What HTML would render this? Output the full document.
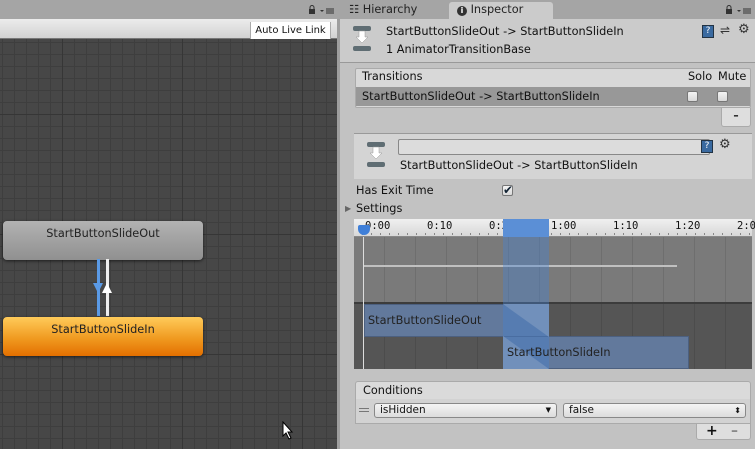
<!DOCTYPE html>
<html><head><style>
*{margin:0;padding:0;box-sizing:border-box}
body{width:755px;height:449px;overflow:hidden;background:#c2c2c2;font-family:"DejaVu Sans","Liberation Sans",sans-serif;font-size:10.5px;color:#111;position:relative}
.a{position:absolute}
.t{font-size:11.3px;margin-top:1px}
.grid{left:0;top:39px;width:337px;height:410px;background-color:#474747;
background-image:linear-gradient(#363636 1px,transparent 1px),linear-gradient(90deg,#363636 1px,transparent 1px),linear-gradient(#3e3e3e 1px,transparent 1px),linear-gradient(90deg,#3e3e3e 1px,transparent 1px);
background-size:120px 120px,120px 120px,12px 12px,12px 12px;background-position:0 -45px,62px 0,0 -9px,2px 0}
.node{border-radius:4px;text-align:center;box-shadow:0 1px 3px rgba(0,0,0,.6)}
.cb{width:11px;height:11px;border:1px solid #777;border-radius:2px;background:linear-gradient(#f4f4f4,#d8d8d8)}
</style></head><body>
<div class="a" style="left:0;top:0;width:340px;height:19px;background:#a5a5a5"></div>
<svg class="a" style="left:308px;top:5px" width="30" height="10"><path d="M2 4 V2.5 a2 2 0 0 1 4 0 V4" fill="none" stroke="#333"/><rect x="1" y="4" width="6" height="5" fill="#333"/><path d="M12 5 h4 l-2 2z" fill="#333"/><path d="M18 4h8M18 6h8M18 8h8" stroke="#333"/></svg>
<div class="a" style="left:0;top:19px;width:337px;height:20px;background:linear-gradient(#ececec,#d2d2d2);border-bottom:1px solid #777"></div>
<div class="a" style="left:250px;top:22px;width:81px;height:17px;background:#fff;border-left:1px solid #aaa;border-right:1px solid #aaa;font-size:10px;text-align:center;line-height:17px">Auto Live Link</div>
<div class="grid a"></div>
<div class="a" style="left:337px;top:19px;width:3px;height:430px;background:#9e9e9e"></div>
<div class="a node t" style="left:3px;top:220px;width:200px;height:39px;background:linear-gradient(#b2b2b2,#909090);line-height:26px;color:#222">StartButtonSlideOut</div>
<div class="a" style="left:97px;top:259px;width:3px;height:57px;background:#5a9ae6"></div>
<div class="a" style="left:106px;top:259px;width:3px;height:57px;background:#eee"></div>
<div class="a" style="left:93px;top:283px;width:0;height:0;border-left:5px solid transparent;border-right:5px solid transparent;border-top:10px solid #5a9ae6"></div>
<div class="a" style="left:102px;top:283px;width:0;height:0;border-left:5px solid transparent;border-right:5px solid transparent;border-bottom:10px solid #fff"></div>
<div class="a node t" style="left:3px;top:316px;width:200px;height:39px;background:linear-gradient(#ffcb5a,#f09a20 55%,#e36f00);line-height:26px;color:#222">StartButtonSlideIn</div>
<svg class="a" style="left:282px;top:421px" width="12" height="19"><path d="M1 1 L1 15 L4 12 L7 18 L9 17 L6 11 L10 11 Z" fill="#fff" stroke="#000" stroke-width="1"/></svg>
<div class="a" style="left:340px;top:0;width:415px;height:19px;background:#a5a5a5"></div>
<div class="a t" style="left:349px;top:2px;color:#222">☷ Hierarchy</div>
<div class="a t" style="left:449px;top:2px;width:104px;height:17px;background:#cbcbcb;border-radius:3px 3px 0 0;padding:1px 0 0 8px;color:#222;margin-top:0"><span style="display:inline-block;width:10px;height:10px;border-radius:50%;background:#333;color:#fff;font-size:8px;text-align:center;line-height:10px;font-weight:bold">i</span> Inspector</div>
<svg class="a" style="left:725px;top:5px" width="30" height="10"><path d="M2 4 V2.5 a2 2 0 0 1 4 0 V4" fill="none" stroke="#333"/><rect x="1" y="4" width="6" height="5" fill="#333"/><path d="M12 5 h4 l-2 2z" fill="#333"/><path d="M18 4h8M18 6h8M18 8h8" stroke="#333"/></svg>
<div class="a" style="left:340px;top:19px;width:415px;height:44px;background:#cbcbcb;border-bottom:1px solid #999"></div>
<svg class="a" style="left:352px;top:25px" width="22" height="28"><rect x="1" y="1" width="18" height="5" rx="2" fill="#5f6d73"/><rect x="1" y="21" width="18" height="5" rx="2" fill="#5f6d73"/><path d="M7 6 V12 H4 L10 18 L16 12 H13 V6 Z" fill="#fff" stroke="#999" stroke-width=".5"/></svg>
<div class="a t" style="left:386px;top:24px">StartButtonSlideOut -&gt; StartButtonSlideIn</div>
<div class="a t" style="left:386px;top:42px">1 AnimatorTransitionBase</div>
<div class="a" style="left:702px;top:25px;width:12px;height:13px;background:#3a6aa0;border:1px solid #234;color:#fff;font-size:9px;text-align:center;line-height:11px">?</div>
<div class="a" style="left:720px;top:23px;font-size:12px;color:#333">⇌</div>
<div class="a" style="left:738px;top:22px;font-size:13px;color:#333">⚙</div>
<div class="a" style="left:355px;top:68px;width:396px;height:40px;background:#d8d8d8;border:1px solid #aaa;border-radius:2px"></div>
<div class="a t" style="left:362px;top:69px">Transitions</div>
<div class="a t" style="left:688px;top:69px">Solo</div>
<div class="a t" style="left:718px;top:69px">Mute</div>
<div class="a" style="left:356px;top:87px;width:394px;height:19px;background:#989898"></div>
<div class="a t" style="left:362px;top:89px">StartButtonSlideOut -&gt; StartButtonSlideIn</div>
<div class="a cb" style="left:687px;top:91px"></div>
<div class="a cb" style="left:717px;top:91px"></div>
<div class="a" style="left:721px;top:108px;width:30px;height:19px;background:#dedede;border:1px solid #aaa;border-top:none;border-radius:0 0 3px 3px;text-align:center;font-weight:bold;line-height:17px">–</div>
<div class="a" style="left:354px;top:133px;width:398px;height:46px;background:#d4d4d4;border-top:1px solid #999"></div>
<svg class="a" style="left:366px;top:141px" width="22" height="28"><rect x="1" y="1" width="18" height="5" rx="2" fill="#5f6d73"/><rect x="1" y="21" width="18" height="5" rx="2" fill="#5f6d73"/><path d="M7 6 V12 H4 L10 18 L16 12 H13 V6 Z" fill="#fff" stroke="#999" stroke-width=".5"/></svg>
<div class="a" style="left:398px;top:139px;width:312px;height:16px;background:#dcdcdc;border:1px solid #888;border-radius:2px"></div>
<div class="a" style="left:701px;top:140px;width:12px;height:13px;background:#3a6aa0;border:1px solid #234;color:#fff;font-size:9px;text-align:center;line-height:11px">?</div>
<div class="a" style="left:719px;top:137px;font-size:13px;color:#333">⚙</div>
<div class="a t" style="left:400px;top:158px">StartButtonSlideOut -&gt; StartButtonSlideIn</div>
<div class="a t" style="left:356px;top:183px">Has Exit Time</div>
<div class="a cb" style="left:502px;top:185px;font-size:12px;line-height:9px;text-align:center;font-weight:bold;color:#123">✔</div>
<div class="a" style="left:345px;top:204px;color:#666;font-size:8px">▶</div>
<div class="a t" style="left:356px;top:201px">Settings</div>
<div class="a" style="left:354px;top:219px;width:398px;height:18px;background:linear-gradient(#f0f0f0,#d8d8d8);border-bottom:1px solid #888"></div>
<div class="a" style="left:354px;top:233px;width:398px;height:2px;background-image:repeating-linear-gradient(90deg,transparent 0 8px,#888 8px 9px)"></div>
<div class="a" style="left:354px;top:220px;width:398px;font-size:10.5px;font-family:'DejaVu Sans Mono','Liberation Mono',monospace">
<span class="a" style="left:11px">0:00</span><span class="a" style="left:73px">0:10</span><span class="a" style="left:135px">0:20</span><span class="a" style="left:197px">1:00</span><span class="a" style="left:259px">1:10</span><span class="a" style="left:321px">1:20</span><span class="a" style="left:383px">2:0</span></div>
<div class="a" style="left:354px;top:237px;width:398px;height:65px;background:#7a7a7a;background-image:repeating-linear-gradient(90deg,transparent 0 30px,#6e6e6e 30px 31px)"></div>
<div class="a" style="left:354px;top:302px;width:398px;height:67px;background:#555;border-top:2px solid #3c3c3c;background-image:repeating-linear-gradient(90deg,transparent 0 30px,#4c4c4c 30px 31px)"></div>
<div class="a" style="left:364px;top:265px;width:313px;height:2px;background:#c0c0c0"></div>
<div class="a" style="left:364px;top:304px;width:185px;height:33px;background:#62799c;border:1px solid #4c6080"></div>
<div class="a" style="left:503px;top:336px;width:186px;height:33px;background:#62799c;border:1px solid #4c6080"></div>
<svg class="a" style="left:503px;top:304px" width="46" height="65"><path d="M0 0 H46 V33 Z" fill="#8e9aac"/><path d="M0 32 L46 65 H0 Z" fill="#8e9aac"/></svg>
<div class="a" style="left:503px;top:219px;width:46px;height:150px;background:rgba(70,130,210,.4)"></div>
<div class="a" style="left:503px;top:219px;width:46px;height:18px;background:#5b8fd6"></div>
<div class="a t" style="left:368px;top:313px;color:#222">StartButtonSlideOut</div>
<div class="a t" style="left:507px;top:345px;color:#222">StartButtonSlideIn</div>
<div class="a" style="left:363px;top:237px;width:1px;height:132px;background:#ddd"></div>
<div class="a" style="left:358px;top:225px;width:12px;height:10px;background:#3f7fd8;border-radius:2px 2px 6px 6px"></div>
<div class="a t" style="left:355px;top:380px;width:396px;height:19px;background:#dadada;border:1px solid #aaa;border-radius:3px 3px 0 0;padding:2px 0 0 7px">Conditions</div>
<div class="a" style="left:355px;top:399px;width:396px;height:25px;background:#d2d2d2;border:1px solid #aaa;border-top:none"></div>
<div class="a" style="left:359px;top:408px;width:10px;height:4px;border-top:1px solid #777;border-bottom:1px solid #777"></div>
<div class="a" style="left:374px;top:403px;width:183px;height:15px;background:linear-gradient(#f4f4f4,#dcdcdc);border:1px solid #888;border-radius:3px;padding-left:5px;line-height:13px">isHidden<span style="float:right;margin-right:5px;font-size:7px">▼</span></div>
<div class="a" style="left:563px;top:403px;width:183px;height:15px;background:linear-gradient(#f4f4f4,#dcdcdc);border:1px solid #888;border-radius:3px;padding-left:5px;line-height:13px">false<span style="float:right;margin-right:4px;font-size:8px">⬍</span></div>
<div class="a" style="left:696px;top:424px;width:55px;height:16px;background:#dedede;border:1px solid #aaa;border-top:none;border-radius:0 0 3px 3px;font-size:14px;font-weight:bold;line-height:14px"><span style="position:absolute;left:9px">+</span><span style="position:absolute;left:34px;color:#888">–</span></div>
</body></html>
